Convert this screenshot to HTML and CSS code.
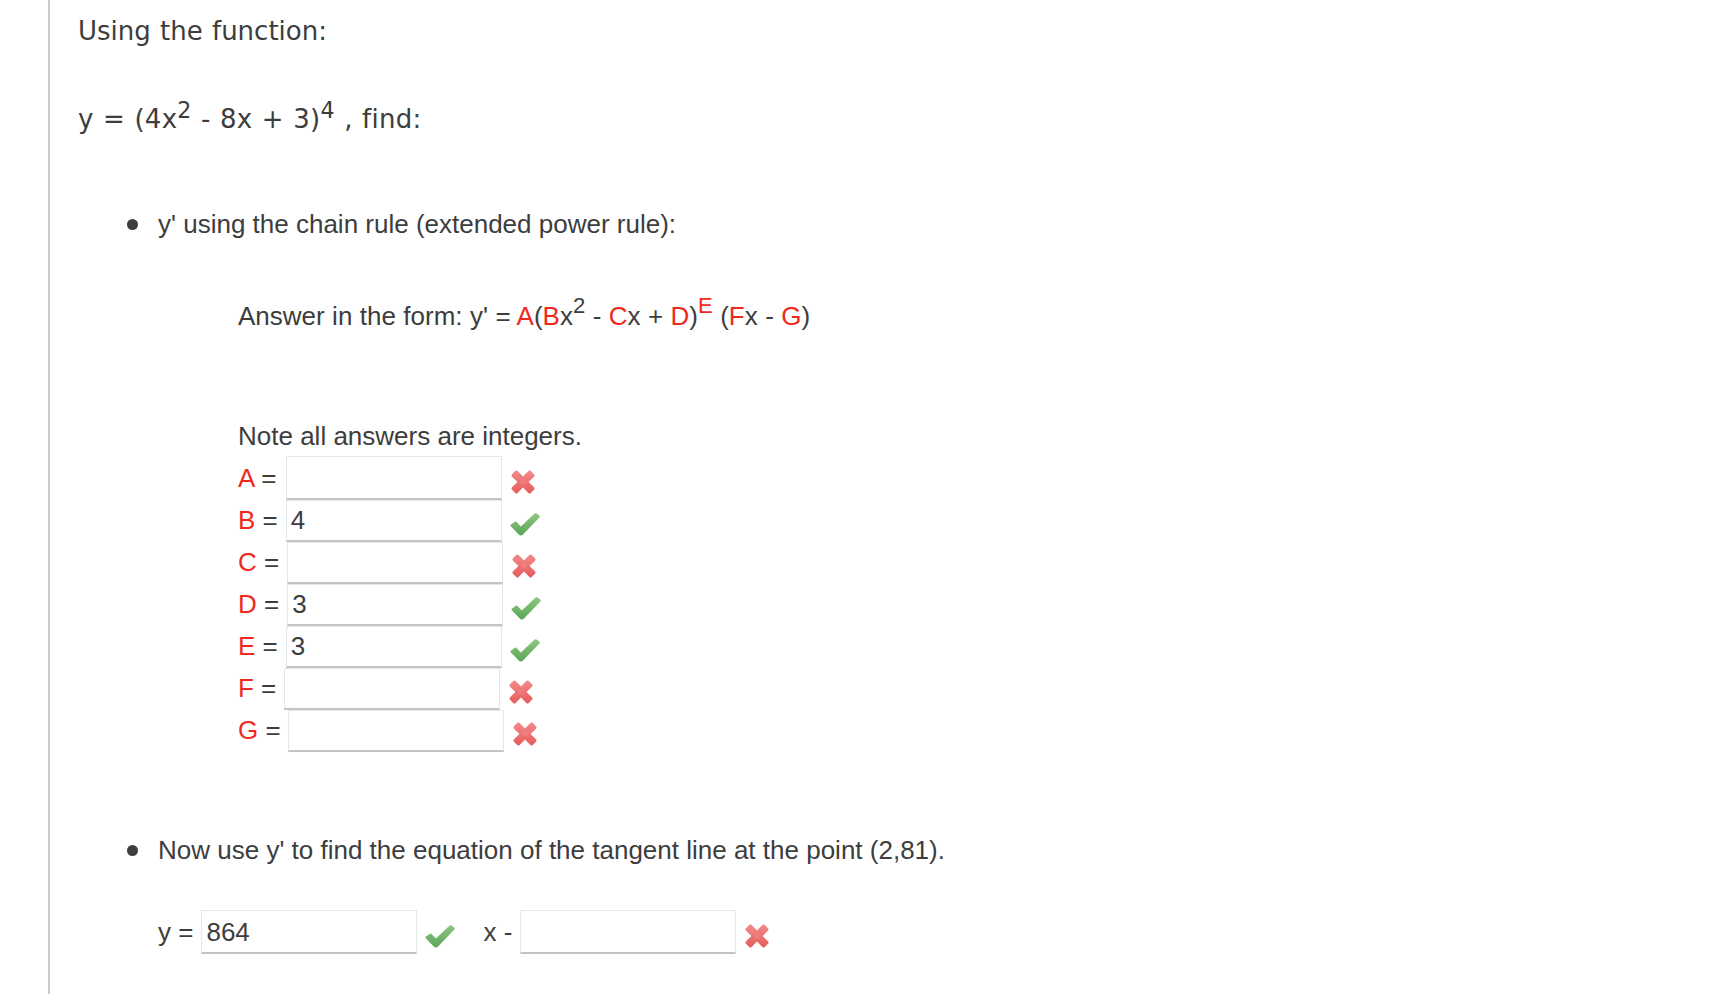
FILE: index.html
```html
<!DOCTYPE html>
<html lang="en">
<head>
<meta charset="utf-8">
<title>Chain rule question</title>
<link rel="stylesheet" href="styles.css">
</head>
<body>
<svg class="defs" width="0" height="0" aria-hidden="true">
  <defs>
    <linearGradient id="redg" x1="0" y1="0" x2="0" y2="1">
      <stop offset="0" stop-color="#f38a8a"/>
      <stop offset="1" stop-color="#e65c5c"/>
    </linearGradient>
    <linearGradient id="greeng" x1="0" y1="0" x2="0" y2="1">
      <stop offset="0" stop-color="#8ec882"/>
      <stop offset="1" stop-color="#5aa556"/>
    </linearGradient>
    <filter id="soft" x="-10%" y="-10%" width="120%" height="120%"><feGaussianBlur stdDeviation="0.7"/></filter>
    <symbol id="cross" viewBox="0 0 28 28">
      <path d="M2.8 6.4 L6.4 2.8 Q7.4 2 8.4 2.8 L14 8.4 L19.6 2.8 Q20.6 2 21.6 2.8 L25.2 6.4 Q26 7.4 25.2 8.4 L19.6 14 L25.2 19.6 Q26 20.6 25.2 21.6 L21.6 25.2 Q20.6 26 19.6 25.2 L14 19.6 L8.4 25.2 Q7.4 26 6.4 25.2 L2.8 21.6 Q2 20.6 2.8 19.6 L8.4 14 L2.8 8.4 Q2 7.4 2.8 6.4 Z" fill="url(#redg)" filter="url(#soft)"/>
      <rect x="11.5" y="11.5" width="5" height="5" fill="#ee7d7d" filter="url(#soft)"/>
    </symbol>
    <symbol id="check" viewBox="0 0 32 28">
      <path d="M1.5 16 Q1.2 15 2 14.4 L6 11.8 Q7 11.3 7.8 12.2 L11.8 16.6 L25.6 3.6 Q26.6 2.8 27.6 3.5 L30.4 5.8 Q31.2 6.7 30.4 7.6 L14 24.6 Q12 26.4 10 24.8 Z" fill="url(#greeng)" filter="url(#soft)"/>
    </symbol>
  </defs>
</svg>
<main class="panel">
  <p class="lead">Using the function:</p>
  <p class="lead formula">y = (4x<sup>2</sup> - 8x + 3)<sup>4</sup> , find:</p>
  <ul class="parts">
    <li class="part">
      <p class="intro">y' using the chain rule (extended power rule):</p>
      <div class="answer">
        <p class="form">Answer in the form: y' = <span class="v">A</span>(<span class="v">B</span>x<sup>2</sup> - <span class="v">C</span>x + <span class="v">D</span>)<sup class="v">E</sup> (<span class="v">F</span>x - <span class="v">G</span>)</p>
        <p class="note">Note all answers are integers.</p>
        <div class="row"><span class="label wide"><span class="v">A</span> =</span><input class="box" type="text" value=""><svg class="ic-x"><use href="#cross"/></svg></div>
        <div class="row"><span class="label"><span class="v">B</span> =</span><input class="box" type="text" value="4"><svg class="ic-c"><use href="#check"/></svg></div>
        <div class="row"><span class="label"><span class="v">C</span> =</span><input class="box" type="text" value=""><svg class="ic-x"><use href="#cross"/></svg></div>
        <div class="row"><span class="label"><span class="v">D</span> =</span><input class="box" type="text" value="3"><svg class="ic-c"><use href="#check"/></svg></div>
        <div class="row"><span class="label"><span class="v">E</span> =</span><input class="box" type="text" value="3"><svg class="ic-c"><use href="#check"/></svg></div>
        <div class="row"><span class="label"><span class="v">F</span> =</span><input class="box" type="text" value=""><svg class="ic-x"><use href="#cross"/></svg></div>
        <div class="row"><span class="label narrow"><span class="v">G</span> =</span><input class="box" type="text" value=""><svg class="ic-x"><use href="#cross"/></svg></div>
      </div>
    </li>
    <li class="part second">
      <p class="intro">Now use y' to find the equation of the tangent line at the point (2,81).</p>
      <div class="row tangent">
        <span class="label">y =</span><input class="box" type="text" value="864"><svg class="ic-c"><use href="#check"/></svg>
        <span class="label xterm">x -</span><input class="box" type="text" value=""><svg class="ic-x"><use href="#cross"/></svg>
      </div>
    </li>
  </ul>
</main>
</body>
</html>
```
FILE: styles.css
```css
html, body {
  margin: 0;
  height: 100%;
  background: #fff;
  overflow: hidden;
}
.defs { position: absolute; }
.panel {
  box-sizing: border-box;
  height: 994px;
  margin-left: 48px;
  border-left: 2px solid #cacaca;
  padding-left: 28px;
  color: #3d3d3d;
  font-family: "Liberation Sans", Arial, sans-serif;
  font-size: 26px;
}
p { margin: 0; }
.lead {
  font-family: "DejaVu Sans", Verdana, sans-serif;
  font-size: 26px;
  line-height: 30px;
  padding-top: 16px;
  word-spacing: 1px;
}
.formula { padding-top: 58px; word-spacing: 0.8px; letter-spacing: 0.28px; }
sup { font-size: 85%; line-height: 0; vertical-align: 12px; }
.lead sup { vertical-align: 10px; }
.parts {
  list-style: none;
  margin: 0;
  padding: 0 0 0 80px;
}
.part { padding-top: 75px; }
.part.second { padding-top: 84px; }
.intro { line-height: 30px; }
.intro::before {
  content: "";
  display: inline-block;
  width: 11px;
  height: 11px;
  margin-left: -31px;
  margin-right: 20px;
  border-radius: 50%;
  background: #3d3d3d;
  vertical-align: 3px;
}
.answer { padding: 62px 0 0 80px; }
.form { line-height: 30px; word-spacing: 0.2px; }
.note { line-height: 30px; padding: 90px 0 6px; }
.v { color: #ee2a1f; }
.row {
  display: flex;
  align-items: center;
  height: 42px;
}
.label { white-space: pre; padding-right: 8px; }
.label.wide { padding-right: 10px; }
.label.narrow { padding-right: 7px; }
.box {
  box-sizing: border-box;
  width: 216px;
  height: 42px;
  margin: 1px 0 0;
  padding: 1px 4px 0;
  border: 1px solid #e6e6e6;
  border-bottom: 2px solid #c4c4c4;
  outline: none;
  background: #fff;
  color: #3d3d3d;
  font: inherit;
}
.note + .row .box,
.tangent .box {
  height: 44px;
  margin: 0 0 1px;
  padding-top: 2px;
}
.ic-x { width: 28px; height: 28px; margin: 7px 0 0 7px; }
.ic-c { width: 32px; height: 28px; margin: 7px 0 0 7px; }
.tangent { margin-top: 45px; height: 44px; }
.xterm { margin-left: 27px; }
```
